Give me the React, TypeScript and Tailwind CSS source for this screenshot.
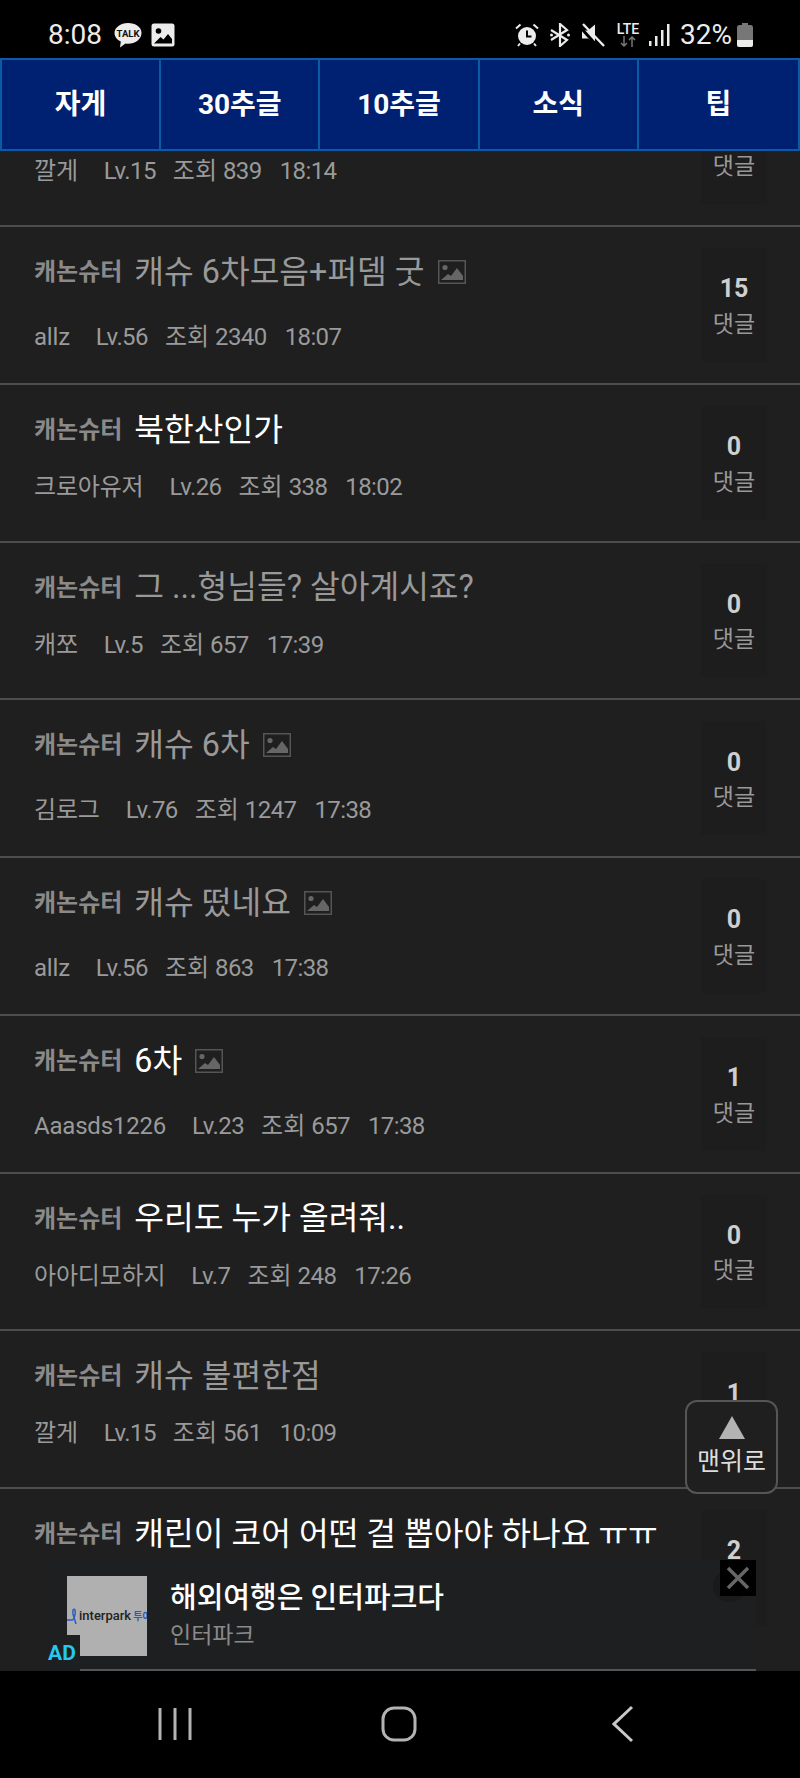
const font = "font-['Roboto','Noto_Sans_CJK_KR',sans-serif]";

type Row = { title: string; read: boolean; img?: boolean; user: string; lv: string; views: string; time: string; count: string };

const rows: Row[] = [
  { title: "", read: true, user: "깔게", lv: "Lv.15", views: "839", time: "18:14", count: "" },
  { title: "캐슈 6차모음+퍼뎀 굿", read: true, img: true, user: "allz", lv: "Lv.56", views: "2340", time: "18:07", count: "15" },
  { title: "북한산인가", read: false, user: "크로아유저", lv: "Lv.26", views: "338", time: "18:02", count: "0" },
  { title: "그 ...형님들? 살아계시죠?", read: true, user: "캐쪼", lv: "Lv.5", views: "657", time: "17:39", count: "0" },
  { title: "캐슈 6차", read: true, img: true, user: "김로그", lv: "Lv.76", views: "1247", time: "17:38", count: "0" },
  { title: "캐슈 떴네요", read: true, img: true, user: "allz", lv: "Lv.56", views: "863", time: "17:38", count: "0" },
  { title: "6차", read: false, img: true, user: "Aaasds1226", lv: "Lv.23", views: "657", time: "17:38", count: "1" },
  { title: "우리도 누가 올려줘..", read: false, user: "아아디모하지", lv: "Lv.7", views: "248", time: "17:26", count: "0" },
  { title: "캐슈 불편한점", read: true, user: "깔게", lv: "Lv.15", views: "561", time: "10:09", count: "1" },
  { title: "캐린이 코어 어떤 걸 뽑아야 하나요 ㅠㅠ", read: false, user: "", lv: "", views: "", time: "", count: "2" },
];

function PicIcon() {
  return (
    <svg width="28" height="24" viewBox="0 0 28 24" className="ml-[13px] shrink-0">
      <rect x="0.75" y="0.75" width="26.5" height="22.5" fill="none" stroke="#555" strokeWidth="1.5" />
      <circle cx="7" cy="7.5" r="2.6" fill="#666" />
      <path d="M3 20 L10 14 L13 16 L19 8 L25 16 V20 Z" fill="#666" />
    </svg>
  );
}

function ListRow({ r, last }: { r: Row; last: boolean }) {
  return (
    <div className={`h-[157.75px] shrink-0 flex bg-[#1f1f1f] ${last ? "" : "border-b-2 border-[#4d4d4d]"}`}>
      <div className="flex-1 min-w-0 pl-[34px] pt-[24px]">
        <div className="flex items-center h-[42px]">
          {r.title && <span className="text-[24px] font-bold text-[#8a8a8a] leading-none mr-[12px]">캐논슈터</span>}
          <span className={`text-[32.3px] leading-none whitespace-nowrap ${r.read ? "text-[#999999]" : "text-white"}`}>{r.title}</span>
          {r.img && <PicIcon />}
        </div>
        {r.user && (
          <div className={`flex items-center h-[34px] text-[24px] tracking-[-0.6px] text-[#9a9a9a] whitespace-nowrap ${r.img ? "mt-[27px]" : "mt-[19px]"}`}>
            <span className="mr-[26px] tracking-[-0.2px]">{r.user}</span>
            <span className="mr-[17px]">{r.lv}</span>
            <span className="mr-[6px] tracking-normal">조회</span>
            <span className="mr-[18px]">{r.views}</span>
            <span>{r.time}</span>
          </div>
        )}
      </div>
      <div className="w-[66px] mr-[33px] mt-[21px] mb-[21px] flex flex-col items-center bg-[#1d1d1d]">
        <span className="mt-[24px] h-[34px] flex items-center text-[25px] font-bold text-[#cfcfcf]">{r.count}</span>
        {!last && <span className="h-[38px] flex items-center text-[23px] text-[#999999]">댓글</span>}
      </div>
    </div>
  );
}

function StatusBar() {
  return (
    <div className="h-[58px] shrink-0 bg-black flex items-center text-[#ececec] pt-[11px]">
      <span className="ml-[48px] text-[28px] leading-none">8:08</span>
      <svg width="30" height="28" viewBox="0 0 30 28" className="ml-[11px]">
        <path d="M15 2C7.500 2 1.500 6.500 1.500 12c0 3.600 2.500 6.800 6.300 8.600L7 26.500l5.500-3.900c.8.100 1.600.2 2.500.2 7.500 0 13.500-4.700 13.500-10.800S22.500 2 15 2z" fill="#ececec" />
        <text x="15" y="16" textAnchor="middle" fontSize="9.500" fontWeight="700" fill="#111">TALK</text>
      </svg>
      <svg width="24" height="24" viewBox="0 0 24 24" className="ml-[8px]">
        <rect x="0.500" y="0.500" width="23" height="23" rx="2.500" fill="#ececec" />
        <circle cx="7.500" cy="8" r="2.800" fill="#000" />
        <path d="M3 20.500 L9.500 14 L12.500 16.500 L17 11 L21 16 V20.500 Z" fill="#000" />
      </svg>
      <div className="ml-auto flex items-center mr-[47px]">
        <svg width="24" height="24" viewBox="0 0 24 24">
          <circle cx="12" cy="13" r="9" fill="#ececec" />
          <path d="M12 7.500V13.500H16.500" stroke="#000" strokeWidth="2" fill="none" />
          <path d="M1 5.500L5.500 1.500M23 5.500L18.500 1.500M5 20.500L3 23M19 20.500L21 23" stroke="#ececec" strokeWidth="2" />
        </svg>
        <svg width="22" height="24" viewBox="0 0 22 24" className="ml-[10px]">
          <path d="M2 7L18 17L11 23V1L18 7L2 17" stroke="#ececec" strokeWidth="2.200" fill="none" />
          <circle cx="2.500" cy="12" r="1.500" fill="#ececec" />
          <circle cx="19.500" cy="12" r="1.500" fill="#ececec" />
        </svg>
        <svg width="24" height="24" viewBox="0 0 24 24" className="ml-[10px]">
          <path d="M1 7.500H7L14 1.500V20L7 15.500H1Z" fill="#ececec" />
          <path d="M0 5L18 25" stroke="#000" strokeWidth="3" />
          <path d="M2 1L23 23" stroke="#ececec" strokeWidth="2.400" />
        </svg>
        <div className="ml-[11px] w-[24px] flex flex-col items-center leading-none">
          <span className="text-[14px] font-medium leading-[13px]">LTE</span>
          <svg width="18" height="11" viewBox="0 0 18 11">
            <path d="M5 0V10M2 7L5 10L8 7M13 11V1M10 4L13 1L16 4" stroke="#777" strokeWidth="1.500" fill="none" />
          </svg>
        </div>
        <svg width="21" height="22" viewBox="0 0 21 22" className="ml-[9px]">
          <rect x="0" y="17" width="2.500" height="5" fill="#ececec" />
          <rect x="6" y="12" width="2.500" height="10" fill="#ececec" />
          <rect x="12" y="6" width="2.500" height="16" fill="#ececec" />
          <rect x="18" y="0" width="2.500" height="22" fill="#ececec" />
        </svg>
        <span className="ml-[10px] text-[28px] leading-none">32%</span>
        <svg width="16" height="24" viewBox="0 0 16 24" className="ml-[5px]">
          <rect x="5" y="0" width="6" height="3" fill="#777" />
          <rect x="0" y="2" width="16" height="22" rx="2.500" fill="#777" />
          <path d="M0 17H16V21.500A2.500 2.500 0 0 1 13.500 24H2.500A2.500 2.500 0 0 1 0 21.500Z" fill="#ececec" />
        </svg>
      </div>
    </div>
  );
}

function Tabs() {
  const tabs = ["자게", "30추글", "10추글", "소식", "팁"];
  return (
    <div className="h-[93px] shrink-0 grid grid-cols-5 bg-[#002171] border-2 border-[#0a5aa8]">
      {tabs.map((t, i) => (
        <div key={t} className={`flex items-center justify-center text-white font-bold text-[28px] ${i < 4 ? "border-r-2 border-[#0a5aa8]" : ""}`}>
          {t}
        </div>
      ))}
    </div>
  );
}

function TopButton() {
  return (
    <div className="absolute left-[685px] top-[1400px] w-[93px] h-[94px] rounded-[12px] border-2 border-[#555] bg-[#1f1f1f] flex flex-col items-center">
      <svg width="26" height="23" viewBox="0 0 26 23" className="mt-[14px]">
        <path d="M13 0L26 23H0Z" fill="#b3b3b3" />
      </svg>
      <span className="mt-[7px] text-[25px] leading-[32px] text-[#dddddd] whitespace-nowrap">맨위로</span>
    </div>
  );
}

function AdBanner() {
  return (
    <div className="absolute left-[44px] top-[1560px] w-[712px] h-[111px] bg-[#1e1f21] border-b-2 border-[#555] flex">
      <div className="ml-[23px] mt-[16px] w-[80px] h-[80px] bg-[#b0b0b0] flex items-center overflow-hidden">
        <svg width="12" height="17" viewBox="0 0 12 17" className="shrink-0">
          <path d="M0 12H5C7 12 9 5 8 2C7 0 5 2 6 6L9 16" stroke="#2a5bc4" strokeWidth="1.500" fill="none" />
        </svg>
        <span className="text-[13px] font-medium text-[#222] whitespace-nowrap">interpark</span>
        <span className="ml-[2px] text-[10px] font-bold text-[#2a5bc4] whitespace-nowrap">투어</span>
      </div>
      <div className="ml-[23px] mt-[19px]">
        <div className="text-[29px] leading-[38px] font-medium text-white whitespace-nowrap">해외여행은 인터파크다</div>
        <div className="text-[23px] leading-[38px] text-[#8a8a8a]">인터파크</div>
      </div>
      <div className="absolute left-0 -bottom-[2px] w-[36px] h-[36px] bg-[#1e1f21] flex items-center justify-center">
        <span className="text-[21px] font-bold text-[#25c8ee] leading-none">AD</span>
      </div>
      <div className="absolute left-[669px] top-[10px] w-[34px] h-[32px] rounded-full bg-[#1a1a1b]" />
      <div className="absolute left-[676px] top-0 w-[36px] h-[36px] bg-black flex items-center justify-center">
        <svg width="24" height="24" viewBox="0 0 24 24">
          <path d="M2 2L22 22M22 2L2 22" stroke="#666" strokeWidth="3.500" />
        </svg>
      </div>
    </div>
  );
}

function NavBar() {
  return (
    <div className="h-[107px] shrink-0 bg-black relative z-10 flex items-center pb-[2px]">
      <svg width="34" height="34" viewBox="0 0 34 34" className="ml-[158px]">
        <path d="M2 1V33M17 1V33M32 1V33" stroke="#b3b3b3" strokeWidth="3" />
      </svg>
      <svg width="36" height="36" viewBox="0 0 36 36" className="ml-[189px]">
        <rect x="2" y="2" width="32" height="32" rx="11" fill="none" stroke="#b3b3b3" strokeWidth="3" />
      </svg>
      <svg width="22" height="38" viewBox="0 0 22 38" className="ml-[195px]">
        <path d="M20 2L2 19L20 36" stroke="#c8c8c8" strokeWidth="3" fill="none" />
      </svg>
    </div>
  );
}

export default function App() {
  return (
    <div className={`relative w-[800px] h-[1778px] overflow-hidden bg-[#1f1f1f] flex flex-col ${font}`}>
      <StatusBar />
      <Tabs />
      <div className="flex-1 min-h-0 overflow-hidden">
        <div className="flex flex-col -mt-[81.75px]">
          {rows.map((r, i) => (
            <ListRow key={i} r={r} last={i === rows.length - 1} />
          ))}
        </div>
      </div>
      <TopButton />
      <AdBanner />
      <NavBar />
    </div>
  );
}
